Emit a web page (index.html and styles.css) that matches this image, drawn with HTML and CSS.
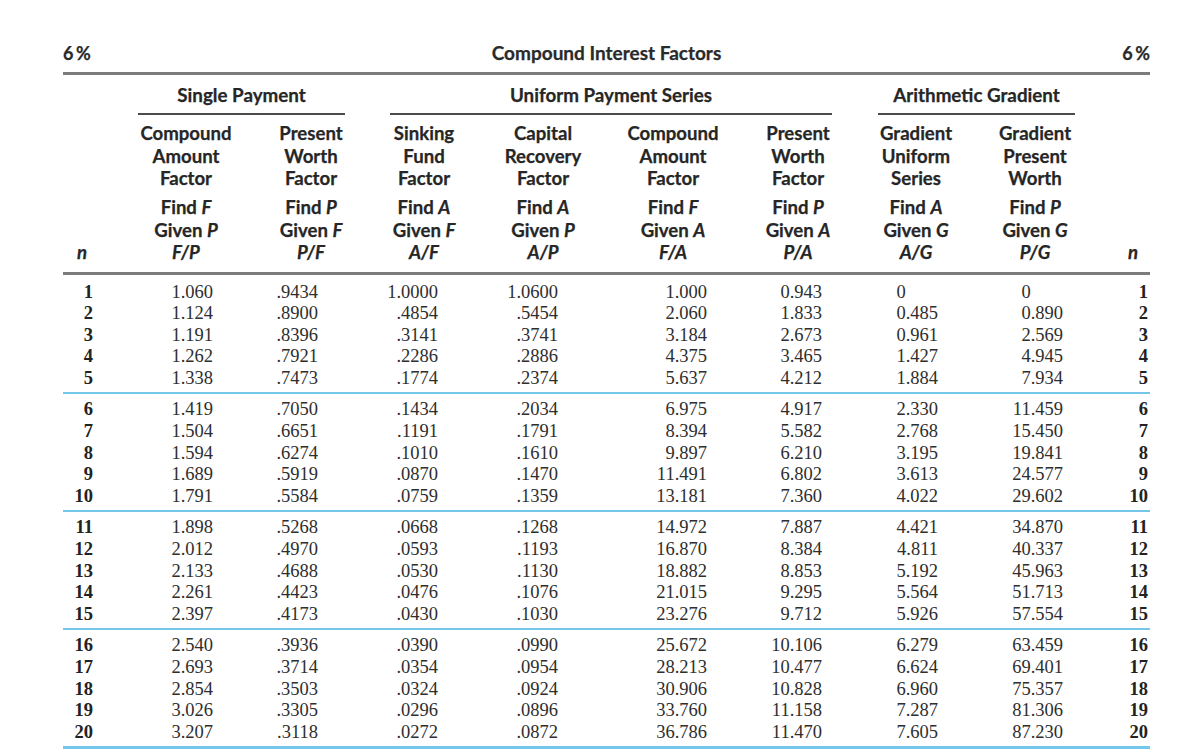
FILE: index.html
```html
<!DOCTYPE html>
<html lang="en">
<head>
<meta charset="utf-8">
<title>Compound Interest Factors 6%</title>
<link rel="stylesheet" href="styles.css">
</head>
<body>
<div class="page">
  <header class="topbar">
    <span class="rate">6%</span>
    <h1 class="title">Compound Interest Factors</h1>
    <span class="rate">6%</span>
  </header>
  <table class="factors">
    <colgroup>
      <col class="w-n"><col class="w-1"><col class="w-2"><col class="w-3"><col class="w-4">
      <col class="w-5"><col class="w-6"><col class="w-7"><col class="w-8"><col class="w-nr">
    </colgroup>
    <thead>
      <tr class="groups">
        <th></th>
        <th colspan="2"><span class="grp grp-single">Single Payment</span></th>
        <th colspan="4"><span class="grp grp-uniform">Uniform Payment Series</span></th>
        <th colspan="2"><span class="grp grp-arith">Arithmetic Gradient</span></th>
        <th></th>
      </tr>
      <tr class="heads">
        <th class="nh nh-left"><i>n</i></th>
        <th><div class="name">Compound<br>Amount<br>Factor</div><div class="find">Find <i>F</i><br>Given <i>P</i><br><i>F/P</i></div></th>
        <th><div class="name">Present<br>Worth<br>Factor</div><div class="find">Find <i>P</i><br>Given <i>F</i><br><i>P/F</i></div></th>
        <th><div class="name">Sinking<br>Fund<br>Factor</div><div class="find">Find <i>A</i><br>Given <i>F</i><br><i>A/F</i></div></th>
        <th><div class="name">Capital<br>Recovery<br>Factor</div><div class="find">Find <i>A</i><br>Given <i>P</i><br><i>A/P</i></div></th>
        <th><div class="name">Compound<br>Amount<br>Factor</div><div class="find">Find <i>F</i><br>Given <i>A</i><br><i>F/A</i></div></th>
        <th><div class="name">Present<br>Worth<br>Factor</div><div class="find">Find <i>P</i><br>Given <i>A</i><br><i>P/A</i></div></th>
        <th><div class="name">Gradient<br>Uniform<br>Series</div><div class="find">Find <i>A</i><br>Given <i>G</i><br><i>A/G</i></div></th>
        <th><div class="name">Gradient<br>Present<br>Worth</div><div class="find">Find <i>P</i><br>Given <i>G</i><br><i>P/G</i></div></th>
        <th class="nh nh-right"><i>n</i></th>
      </tr>
    </thead>
    <tbody class="first">
      <tr><td>1</td><td>1.060</td><td>.9434</td><td>1.0000</td><td>1.0600</td><td>1.000</td><td>0.943</td><td>0<span class="ghost">.485</span></td><td>0<span class="ghost">.890</span></td><td>1</td></tr>
      <tr><td>2</td><td>1.124</td><td>.8900</td><td>.4854</td><td>.5454</td><td>2.060</td><td>1.833</td><td>0.485</td><td>0.890</td><td>2</td></tr>
      <tr><td>3</td><td>1.191</td><td>.8396</td><td>.3141</td><td>.3741</td><td>3.184</td><td>2.673</td><td>0.961</td><td>2.569</td><td>3</td></tr>
      <tr><td>4</td><td>1.262</td><td>.7921</td><td>.2286</td><td>.2886</td><td>4.375</td><td>3.465</td><td>1.427</td><td>4.945</td><td>4</td></tr>
      <tr><td>5</td><td>1.338</td><td>.7473</td><td>.1774</td><td>.2374</td><td>5.637</td><td>4.212</td><td>1.884</td><td>7.934</td><td>5</td></tr>
    </tbody>
    <tbody>
      <tr><td>6</td><td>1.419</td><td>.7050</td><td>.1434</td><td>.2034</td><td>6.975</td><td>4.917</td><td>2.330</td><td>11.459</td><td>6</td></tr>
      <tr><td>7</td><td>1.504</td><td>.6651</td><td>.1191</td><td>.1791</td><td>8.394</td><td>5.582</td><td>2.768</td><td>15.450</td><td>7</td></tr>
      <tr><td>8</td><td>1.594</td><td>.6274</td><td>.1010</td><td>.1610</td><td>9.897</td><td>6.210</td><td>3.195</td><td>19.841</td><td>8</td></tr>
      <tr><td>9</td><td>1.689</td><td>.5919</td><td>.0870</td><td>.1470</td><td>11.491</td><td>6.802</td><td>3.613</td><td>24.577</td><td>9</td></tr>
      <tr><td>10</td><td>1.791</td><td>.5584</td><td>.0759</td><td>.1359</td><td>13.181</td><td>7.360</td><td>4.022</td><td>29.602</td><td>10</td></tr>
    </tbody>
    <tbody>
      <tr><td>11</td><td>1.898</td><td>.5268</td><td>.0668</td><td>.1268</td><td>14.972</td><td>7.887</td><td>4.421</td><td>34.870</td><td>11</td></tr>
      <tr><td>12</td><td>2.012</td><td>.4970</td><td>.0593</td><td>.1193</td><td>16.870</td><td>8.384</td><td>4.811</td><td>40.337</td><td>12</td></tr>
      <tr><td>13</td><td>2.133</td><td>.4688</td><td>.0530</td><td>.1130</td><td>18.882</td><td>8.853</td><td>5.192</td><td>45.963</td><td>13</td></tr>
      <tr><td>14</td><td>2.261</td><td>.4423</td><td>.0476</td><td>.1076</td><td>21.015</td><td>9.295</td><td>5.564</td><td>51.713</td><td>14</td></tr>
      <tr><td>15</td><td>2.397</td><td>.4173</td><td>.0430</td><td>.1030</td><td>23.276</td><td>9.712</td><td>5.926</td><td>57.554</td><td>15</td></tr>
    </tbody>
    <tbody class="last">
      <tr><td>16</td><td>2.540</td><td>.3936</td><td>.0390</td><td>.0990</td><td>25.672</td><td>10.106</td><td>6.279</td><td>63.459</td><td>16</td></tr>
      <tr><td>17</td><td>2.693</td><td>.3714</td><td>.0354</td><td>.0954</td><td>28.213</td><td>10.477</td><td>6.624</td><td>69.401</td><td>17</td></tr>
      <tr><td>18</td><td>2.854</td><td>.3503</td><td>.0324</td><td>.0924</td><td>30.906</td><td>10.828</td><td>6.960</td><td>75.357</td><td>18</td></tr>
      <tr><td>19</td><td>3.026</td><td>.3305</td><td>.0296</td><td>.0896</td><td>33.760</td><td>11.158</td><td>7.287</td><td>81.306</td><td>19</td></tr>
      <tr><td>20</td><td>3.207</td><td>.3118</td><td>.0272</td><td>.0872</td><td>36.786</td><td>11.470</td><td>7.605</td><td>87.230</td><td>20</td></tr>
    </tbody>
  </table>
</div>
</body>
</html>
```
FILE: styles.css
```css
* { box-sizing: border-box; }

html, body {
  margin: 0;
  padding: 0;
  background: #ffffff;
}

.page {
  width: 1087px;
  margin-left: 63px;
  padding-top: 43px;
  color: #222;
}

.topbar {
  display: flex;
  justify-content: space-between;
  align-items: center;
  height: 20px;
  margin-bottom: 9px;
  font-family: Lato, "Open Sans", sans-serif;
  font-weight: 700;
  font-size: 18px;
  line-height: 20px;
  color: #2a2a2a;
  -webkit-text-stroke: 0.25px #2a2a2a;
}

.rate {
  letter-spacing: 2.5px;
  margin-right: -2.5px;
}

.title {
  margin: 0;
  font-size: 19px;
  font-weight: 700;
  line-height: 20px;
}

.factors {
  width: 1087px;
  table-layout: fixed;
  border-collapse: separate;
  border-spacing: 0;
  border-top: 3px solid #7c7c7c;
}

.w-n { width: 63px; }
.w-1 { width: 120px; }
.w-2 { width: 130px; }
.w-3 { width: 96px; }
.w-4 { width: 142px; }
.w-5 { width: 118px; }
.w-6 { width: 132px; }
.w-7 { width: 104px; }
.w-8 { width: 134px; }
.w-nr { width: 48px; }

.factors th {
  padding: 0;
  font-family: Lato, "Open Sans", sans-serif;
  font-weight: 700;
  color: #262626;
  text-align: center;
  -webkit-text-stroke: 0.25px #262626;
}

.groups th {
  padding-top: 9px;
  font-size: 18.8px;
  line-height: 22px;
  vertical-align: top;
}

.grp {
  display: block;
  padding-bottom: 7px;
  border-bottom: 2px solid #4c4c4c;
}

.grp-single { margin: 0 31px 0 12px; }
.grp-uniform { margin: 0 32px 0 14px; }
.grp-arith { margin: 0 27px 0 14px; }

.heads th {
  padding-top: 7px;
  padding-bottom: 8px;
  font-size: 18.6px;
  line-height: 22.5px;
  vertical-align: bottom;
  border-bottom: 3px solid #7c7c7c;
}

.heads .find {
  margin-top: 6.5px;
}

.heads i {
  font-style: italic;
}

.heads .nh-left {
  text-align: left;
  padding-left: 14px;
}

.heads .nh-right {
  text-align: right;
  padding-right: 12px;
}

.factors td {
  padding: 0;
  font-family: "Liberation Serif", "Times New Roman", serif;
  font-size: 18.5px;
  line-height: 21.6px;
  color: #2e2e2e;
  text-align: right;
  white-space: nowrap;
}

.factors td:first-child,
.factors td:last-child {
  font-weight: 700;
  color: #222;
}

.factors td:nth-child(1) { padding-right: 33px; }
.factors td:nth-child(2) { padding-right: 33px; }
.factors td:nth-child(3) { padding-right: 58px; }
.factors td:nth-child(4) { padding-right: 34px; }
.factors td:nth-child(5) { padding-right: 56px; }
.factors td:nth-child(6) { padding-right: 25px; }
.factors td:nth-child(7) { padding-right: 42px; }
.factors td:nth-child(8) { padding-right: 30px; }
.factors td:nth-child(9) { padding-right: 39px; }
.factors td:nth-child(10) { padding-right: 2px; }

.factors tbody tr:first-child td { padding-top: 5px; }
.factors tbody.first tr:first-child td { padding-top: 7px; }
.factors tbody tr:last-child td {
  padding-bottom: 3px;
  border-bottom: 2px solid #74c7ea;
}
.factors tbody.last tr:last-child td {
  border-bottom-width: 3px;
}

.ghost {
  visibility: hidden;
}
```
